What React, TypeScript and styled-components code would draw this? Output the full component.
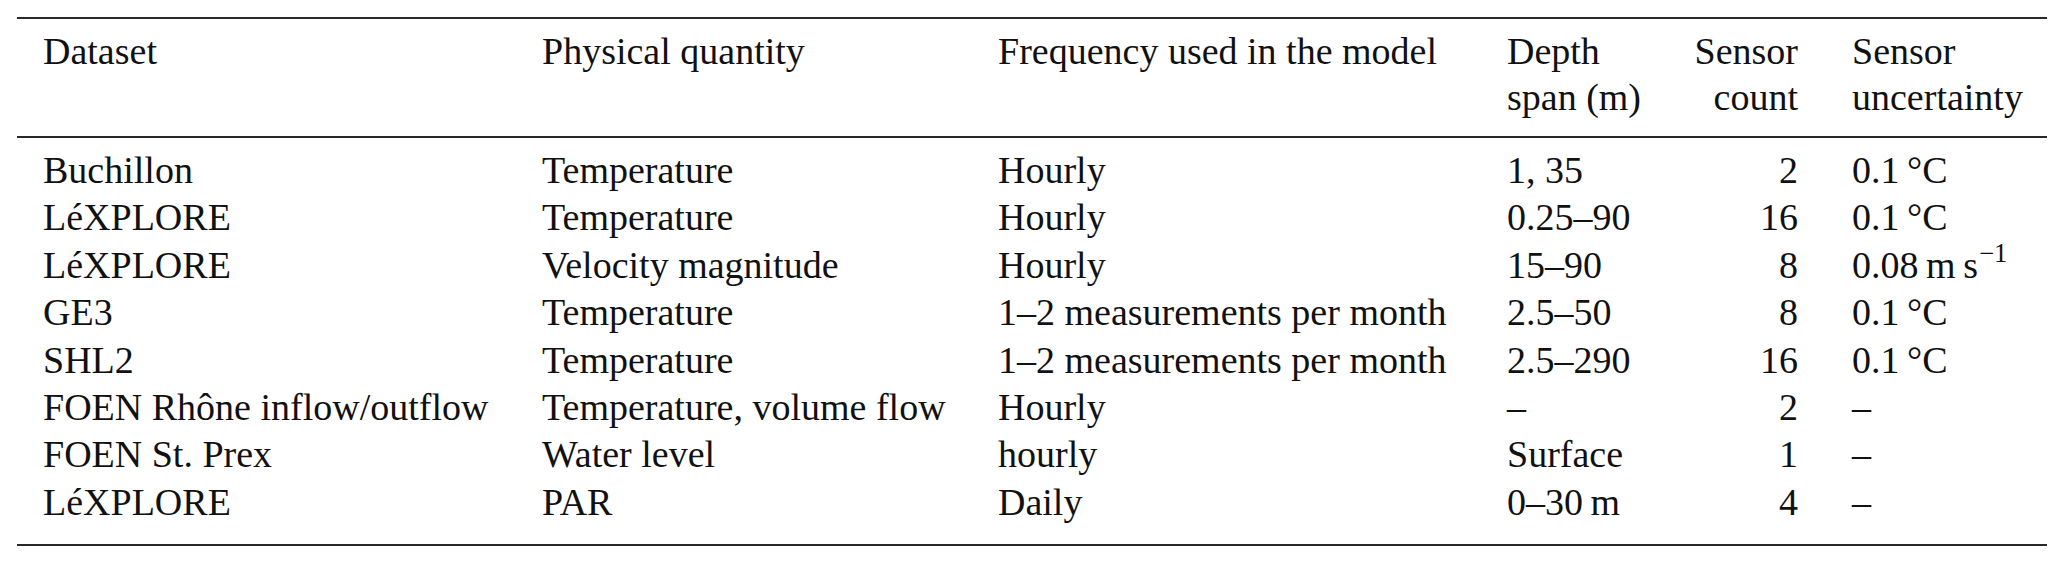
import type { ReactNode } from "react";
import styled, { createGlobalStyle } from "styled-components";

type Align = "left" | "right";

interface Column {
  key: string;
  head: string[];
  align: Align;
}

const GlobalStyle = createGlobalStyle`
  html, body {
    margin: 0;
    padding: 0;
    background: #ffffff;
  }
  body {
    font-family: "Liberation Serif", "Times New Roman", serif;
    color: #111;
  }
`;

const Page = styled.div`
  padding: 17px 20px 0 17px;
`;

const Table = styled.div`
  width: 2030px;
  border-top: 2px solid #2a2a2a;
  border-bottom: 2px solid #2a2a2a;
  font-size: 38px;
`;

const grid = `
  display: grid;
  grid-template-columns: 499px 456px 509px 150px 195px 195px;
  padding-left: 26px;
  padding-right: 0;
`;

const HeadBlock = styled.div`
  ${grid}
  padding-top: 9px;
  padding-bottom: 16px;
  line-height: 46px;
  border-bottom: 2px solid #2a2a2a;
`;

const BodyBlock = styled.div`
  ${grid}
  padding-top: 9px;
  padding-bottom: 18px;
  line-height: 47.4px;
`;

const Cell = styled.div<{ $align: Align }>`
  text-align: ${(p) => p.$align};
  padding-right: ${(p) => (p.$align === "right" ? "54px" : "0")};
  white-space: nowrap;
`;

const Sup = styled.sup`
  font-size: 0.7em;
  line-height: 0;
  vertical-align: 0.6em;
  margin-left: 1px;
`;

const columns: Column[] = [
  { key: "dataset", head: ["Dataset"], align: "left" },
  { key: "quantity", head: ["Physical quantity"], align: "left" },
  { key: "frequency", head: ["Frequency used in the model"], align: "left" },
  { key: "depth", head: ["Depth", "span (m)"], align: "left" },
  { key: "count", head: ["Sensor", "count"], align: "right" },
  { key: "uncertainty", head: ["Sensor", "uncertainty"], align: "left" },
];

const T = "\u2009"; // thin space
const degC = `0.1${T}°C`;

// table rows, same order as columns
const rows: ReactNode[][] = [
  ["Buchillon", "Temperature", "Hourly", "1, 35", "2", degC],
  ["LéXPLORE", "Temperature", "Hourly", "0.25–90", "16", degC],
  [
    "LéXPLORE",
    "Velocity magnitude",
    "Hourly",
    "15–90",
    "8",
    <>
      0.08{T}m{T}s<Sup>−1</Sup>
    </>,
  ],
  ["GE3", "Temperature", "1–2 measurements per month", "2.5–50", "8", degC],
  ["SHL2", "Temperature", "1–2 measurements per month", "2.5–290", "16", degC],
  ["FOEN Rhône inflow/outflow", "Temperature, volume flow", "Hourly", "–", "2", "–"],
  ["FOEN St. Prex", "Water level", "hourly", "Surface", "1", "–"],
  ["LéXPLORE", "PAR", "Daily", `0–30${T}m`, "4", "–"],
];

const App = () => {
  return (
    <>
      <GlobalStyle />
      <Page>
        <Table>
          <HeadBlock>
            {columns.map((col) => (
              <Cell key={col.key} $align={col.align}>
                {col.head.map((line) => (
                  <div key={line}>{line}</div>
                ))}
              </Cell>
            ))}
          </HeadBlock>
          <BodyBlock>
            {rows.map((row, r) =>
              row.map((cell, c) => (
                <Cell key={`${r}-${c}`} $align={columns[c].align}>
                  {cell}
                </Cell>
              ))
            )}
          </BodyBlock>
        </Table>
      </Page>
    </>
  );
};

export default App;
